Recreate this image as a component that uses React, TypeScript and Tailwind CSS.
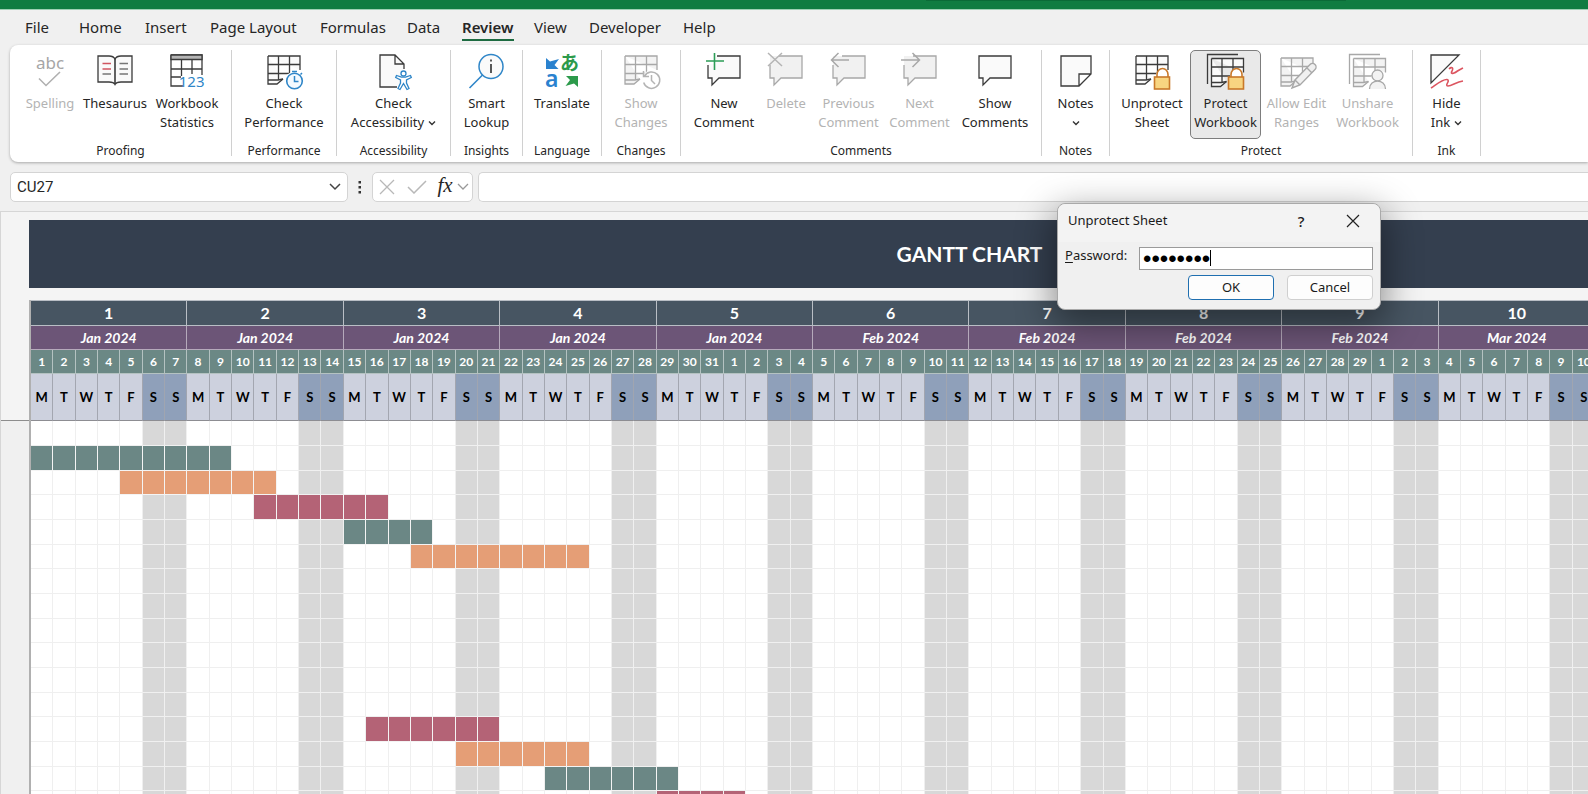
import React from "react";
import type { ReactNode } from "react";

const INK = "#3b3b3b";
const DIM = "#b4b4b4";
const BLUE = "#2f86c8";

function Icon({ children }: { children: ReactNode }) {
  return (
    <svg viewBox="0 0 40 40" className="h-10 w-10 shrink-0 overflow-visible" fill="none" strokeWidth={1.3} aria-hidden="true">
      {children}
    </svg>
  );
}

function Sheet({ color, fill = "#fafafa" }: { color: string; fill?: string }) {
  return (
    <g stroke={color}>
      <path d="M4 5h32v14M4 5v28h9l6-5" fill={fill} />
      <path d="M14.500 5v24M25.500 5v18M4 13.500h32M4 22.500h22M4 29h10l5-1" />
    </g>
  );
}

function Bubble({ color, fill, cut }: { color: string; fill: string; cut?: boolean }) {
  return (
    <>
      <path d="M4 5h32v22H15l-7 7v-7H4z" fill={fill} />
      <path d={cut ? "M13 5h23v22H15l-7 7v-7H4V14" : "M4 5h32v22H15l-7 7v-7H4z"} stroke={color} />
    </>
  );
}

const Lock = () => (
  <g>
    <path d="M25 26v-2.500a5.500 6 0 0 1 11 0V26" stroke="#c9792a" strokeWidth={1.6} fill="#fff" />
    <rect x="22.500" y="26" width="15" height="12" fill="#f8d581" stroke="#c9792a" strokeWidth={1.6} />
  </g>
);

const SpellingIcon = () => (
  <Icon>
    <text x="20" y="18" textAnchor="middle" fontSize="17" fontFamily="Noto Sans, sans-serif" fill="#a6a6a6">abc</text>
    <path d="M9 27.500l7 7L30 21" stroke="#b0b0b0" strokeWidth={1.6} />
  </Icon>
);
const ThesaurusIcon = () => (
  <Icon>
    <path d="M3 5h11c3 0 5 1 6 3 1-2 3-3 6-3h11v26H26c-3 0-5 .6-6 2.500-1-1.900-3-2.500-6-2.500H3z" fill="#fafafa" stroke={INK} />
    <path d="M20 8v25" stroke={INK} strokeWidth={1.6} />
    <path d="M7.500 12.500h8.500M7.500 18h8.500" stroke="#d05560" />
    <path d="M7.500 23h8.500M24.500 12.500H33M24.500 18H33M24.500 23H33" stroke="#777" />
  </Icon>
);
const StatisticsIcon = () => (
  <Icon>
    <path d="M4 4h31v20M4 4v31h12" stroke={INK} />
    <path d="M4 4h31v4.500H4z" fill="#b5b5b5" stroke={INK} />
    <path d="M14.500 9v16M25 9v14M4 18h31M4 26h10" stroke={INK} />
    <text x="37.500" y="36" textAnchor="end" fontSize="15" fontFamily="Noto Sans, sans-serif" fill={BLUE}>123</text>
  </Icon>
);
const PerformanceIcon = () => (
  <Icon>
    <Sheet color={INK} />
    <circle cx="30.500" cy="30" r="9.500" fill="#fff" />
    <circle cx="30.500" cy="30" r="7.800" fill="#f4faff" stroke={BLUE} strokeWidth={1.6} />
    <path d="M30.500 25v5.500h4M28 20.500h5M36.500 23.500l1.500-1.500" stroke={BLUE} strokeWidth={1.5} />
  </Icon>
);
const AccessibilityIcon = () => (
  <Icon>
    <path d="M6 4h15l9 9v22H6z" fill="#fafafa" />
    <path d="M23 36H6V4h15l9 9v5M21 4v9h9" stroke={INK} />
    <circle cx="29.500" cy="22.500" r="2.500" fill="#fff" stroke={BLUE} />
    <path d="M22.500 24.500l-.8 2 4.800 2.500v3l-2.500 5.500 2 1 3.500-6 3.500 6 2-1-2.500-5.500v-3l4.800-2.500-.8-2-5 1.700h-4z" fill="#fff" stroke={BLUE} />
  </Icon>
);
const LookupIcon = () => (
  <Icon>
    <circle cx="24" cy="15.500" r="12" fill="#fafafa" stroke={BLUE} strokeWidth={1.5} />
    <path d="M15.500 24L2.500 37" stroke={BLUE} strokeWidth={1.6} />
    <path d="M24 13v9M24 8.500v2" stroke={INK} strokeWidth={1.7} />
  </Icon>
);
const TranslateIcon = () => (
  <Icon>
    <path d="M4 7l4 3.500L17 8l-4.500 6 4 4H4z" fill="#2a82cf" />
    <path d="M36 36l-4-3.500-8.500 2.500 4.500-6-4-4h12z" fill="#2c9a4b" />
    <text x="3" y="36" fontSize="23" fontWeight="600" fontFamily="Noto Sans, sans-serif" fill="#2a82cf">a</text>
    <text x="18" y="19" fontSize="19" fontWeight="700" fontFamily="Noto Sans CJK JP, sans-serif" fill="#2c9a4b">あ</text>
  </Icon>
);
const ChangesIcon = () => (
  <Icon>
    <Sheet color="#a8a8a8" fill="#f3f3f3" />
    <circle cx="30.500" cy="29" r="9.800" fill="#fff" />
    <path d="M23.500 25a8.200 8.200 0 1 1-.8 6.500M22.500 20v5.500H28M30.500 24v5.500l3.500 3.500" stroke={DIM} strokeWidth={1.5} />
  </Icon>
);
const NewCommentIcon = () => (
  <Icon>
    <Bubble color={INK} fill="#fafafa" cut />
    <path d="M1 1h11v12H1z" fill="#fff" />
    <path d="M2 10h18M10.500 2v17" stroke="#2d9d57" strokeWidth={1.6} />
  </Icon>
);
const DeleteIcon = () => (
  <Icon>
    <Bubble color="#a8a8a8" fill="#f1f1f1" cut />
    <path d="M2 2l14 13M16 2L2 15" stroke={DIM} strokeWidth={1.5} />
  </Icon>
);
const PreviousIcon = () => (
  <Icon>
    <Bubble color="#a8a8a8" fill="#f1f1f1" cut />
    <path d="M20 9H3M9.500 2L2.500 9l7 7" stroke="#a8a8a8" strokeWidth={1.5} />
  </Icon>
);
const NextIcon = () => (
  <Icon>
    <Bubble color="#a8a8a8" fill="#f1f1f1" cut />
    <path d="M1 9h18M12.500 2l7 7-7 7" stroke="#a8a8a8" strokeWidth={1.5} />
  </Icon>
);
const ShowCommentsIcon = () => (
  <Icon>
    <Bubble color={INK} fill="#fafafa" />
  </Icon>
);
const NotesIcon = () => (
  <Icon>
    <path d="M5 5h30v18L23 35H5zM35 23H23v12" fill="#fafafa" stroke={INK} />
  </Icon>
);
const UnprotectIcon = () => (
  <Icon>
    <Sheet color={INK} />
    <path d="M21 38V26h3c-1-10 14-10 13-1l2 1v12z" fill="#fff" />
    <Lock />
  </Icon>
);
const ProtectIcon = () => (
  <Icon>
    <path d="M1.500 33V3.500H32" stroke={INK} />
    <g transform="translate(1.500 2.500)">
      <Sheet color={INK} />
    </g>
    <path d="M21 38V26h3c-1-10 14-10 13-1l2 1v12z" fill="#e9e9e9" />
    <Lock />
  </Icon>
);
const AllowIcon = () => (
  <Icon>
    <g transform="translate(0 2)">
      <Sheet color="#a8a8a8" fill="#f3f3f3" />
    </g>
    <path d="M15 37l3-8L33 13.500a3.300 3.300 0 0 1 5 5L23 34zM18 29l5 5M30 17l4.500 4.500" fill="#f0f0f0" stroke="#a8a8a8" strokeWidth={1.4} />
  </Icon>
);
const UnshareIcon = () => (
  <Icon>
    <path d="M1.500 33V3.500H32" stroke="#a8a8a8" />
    <g transform="translate(1.500 2.500)">
      <Sheet color="#a8a8a8" fill="#f3f3f3" />
    </g>
    <path d="M19 38.500c0-6 3-8 5-9-4-9 12-11 11 0 3 1 4.500 4 4.500 9z" fill="#fff" />
    <circle cx="29.500" cy="24.500" r="5.500" fill="#f3f3f3" stroke="#a8a8a8" />
    <path d="M21.500 38c0-10.500 16-10.500 16 0" fill="#f3f3f3" stroke="#a8a8a8" />
  </Icon>
);
const InkIcon = () => (
  <Icon>
    <path d="M4 4h28L4 32z" fill="#fafafa" stroke={INK} />
    <path d="M22 18c3-3 5-1 2.500 3-1 3 4 .5 6-1 2-1.500 3.500-2 5.500-3M4 37c6-4 12-9 16-8.500 4 1-3 6 1 6.500 4 0 8-4 15-5" stroke="#dc5560" strokeWidth={1.6} />
  </Icon>
);

const Chevron = () => (
  <svg viewBox="0 0 8 6" className="inline-block h-[6px] w-2" fill="none" stroke="#333" strokeWidth={1.4} aria-hidden="true">
    <path d="M1 1.500l3 3 3-3" />
  </svg>
);

type Cmd = { lines: string[]; icon: ReactNode; width: string; off?: boolean; on?: boolean; menu?: boolean };
type Group = { name: string; width: string; items: Cmd[] };

const groups: Group[] = [
  {
    name: "Proofing",
    width: "w-[221px] pl-3",
    items: [
      { lines: ["Spelling"], icon: <SpellingIcon />, width: "w-14", off: true },
      { lines: ["Thesaurus"], icon: <ThesaurusIcon />, width: "w-[74px]" },
      { lines: ["Workbook", "Statistics"], icon: <StatisticsIcon />, width: "w-[70px]" },
    ],
  },
  { name: "Performance", width: "w-[104px] justify-center", items: [{ lines: ["Check", "Performance"], icon: <PerformanceIcon />, width: "w-24" }] },
  { name: "Accessibility", width: "w-[113px] justify-center", items: [{ lines: ["Check", "Accessibility"], icon: <AccessibilityIcon />, width: "w-[104px]", menu: true }] },
  { name: "Insights", width: "w-[71px] justify-center", items: [{ lines: ["Smart", "Lookup"], icon: <LookupIcon />, width: "w-16" }] },
  { name: "Language", width: "w-[78px] justify-center", items: [{ lines: ["Translate"], icon: <TranslateIcon />, width: "w-16" }] },
  { name: "Changes", width: "w-[78px] justify-center", items: [{ lines: ["Show", "Changes"], icon: <ChangesIcon />, width: "w-16", off: true }] },
  {
    name: "Comments",
    width: "w-[360px] pl-2",
    items: [
      { lines: ["New", "Comment"], icon: <NewCommentIcon />, width: "w-[70px]" },
      { lines: ["Delete"], icon: <DeleteIcon />, width: "w-[54px]", off: true },
      { lines: ["Previous", "Comment"], icon: <PreviousIcon />, width: "w-[71px]", off: true },
      { lines: ["Next", "Comment"], icon: <NextIcon />, width: "w-[71px]", off: true },
      { lines: ["Show", "Comments"], icon: <ShowCommentsIcon />, width: "w-20" },
    ],
  },
  { name: "Notes", width: "w-[67px] justify-center", items: [{ lines: ["Notes", ""], icon: <NotesIcon />, width: "w-14", menu: true }] },
  {
    name: "Protect",
    width: "w-[302px] pl-1",
    items: [
      { lines: ["Unprotect", "Sheet"], icon: <UnprotectIcon />, width: "w-[76px]" },
      { lines: ["Protect", "Workbook"], icon: <ProtectIcon />, width: "w-[71px]", on: true },
      { lines: ["Allow Edit", "Ranges"], icon: <AllowIcon />, width: "w-[71px]", off: true },
      { lines: ["Unshare", "Workbook"], icon: <UnshareIcon />, width: "w-[71px]", off: true },
    ],
  },
  { name: "Ink", width: "w-[67px] justify-center", items: [{ lines: ["Hide", "Ink"], icon: <InkIcon />, width: "w-14", menu: true }] },
];

function RibbonButton({ cmd }: { cmd: Cmd }) {
  const tone = cmd.off ? "text-[#b3b3b3]" : "text-[#262626]";
  const box = cmd.on ? "rounded-[5px] border-[#7d7d7d] bg-[#e9e9e9]" : "border-transparent";
  return (
    <button
      type="button"
      disabled={cmd.off}
      aria-pressed={cmd.on}
      className={`flex h-[89px] shrink-0 flex-col items-center border text-[13px] leading-[19px] whitespace-nowrap ${cmd.width} ${tone} ${box}`}
    >
      {cmd.icon}
      <span className="mt-[3px]">{cmd.lines[0]}</span>
      {cmd.lines.length > 1 && (
        <span className="flex h-[19px] items-center gap-1">
          {cmd.lines[1]}
          {cmd.menu && <Chevron />}
        </span>
      )}
    </button>
  );
}

const tabs = [
  { name: "File", width: "w-[72px] pl-[25px]" },
  { name: "Home", width: "w-[66px] pl-[7px]" },
  { name: "Insert", width: "w-[65px] pl-[7px]" },
  { name: "Page Layout", width: "w-[110px] pl-[7px]" },
  { name: "Formulas", width: "w-[87px] pl-[7px]" },
  { name: "Data", width: "w-[55px] pl-[7px]" },
  { name: "Review", width: "w-[72px] pl-[7px]" },
  { name: "View", width: "w-[55px] pl-[7px]" },
  { name: "Developer", width: "w-[94px] pl-[7px]" },
  { name: "Help", width: "w-[50px] pl-[7px]" },
];

const WEEKS = 10;
const days = Array.from({ length: WEEKS * 7 }, (_, i) => new Date(2024, 0, 1 + i));
const monthNames = ["Jan", "Feb", "Mar"];
const letters = ["M", "T", "W", "T", "F", "S", "S"];

const TEAL = "bg-[#6b8785]";
const ORANGE = "bg-[#e59e76]";
const ROSE = "bg-[#b46376]";
const tasks = [
  { row: 1, from: 0, to: 8, color: TEAL },
  { row: 2, from: 4, to: 10, color: ORANGE },
  { row: 3, from: 10, to: 15, color: ROSE },
  { row: 4, from: 14, to: 17, color: TEAL },
  { row: 5, from: 17, to: 24, color: ORANGE },
  { row: 12, from: 15, to: 20, color: ROSE },
  { row: 13, from: 19, to: 24, color: ORANGE },
  { row: 14, from: 23, to: 28, color: TEAL },
  { row: 15, from: 28, to: 31, color: ROSE },
];

function cellStyle(row: number, col: number) {
  const task = tasks.find((t) => t.row === row && col >= t.from && col <= t.to);
  if (task) return `${task.color} border-[#f4f4f4]`;
  return col % 7 > 4 ? "bg-[#d8d8d8] border-[#f0f0f0]" : "bg-white border-[#efefef]";
}

function Gantt() {
  return (
    <table className="w-[calc(100%+8px)] table-fixed border-separate border-spacing-0 text-center font-[Lato,sans-serif] font-bold text-white">
      <thead>
        <tr className="h-[25px]">
          {Array.from({ length: WEEKS }, (_, w) => (
            <th key={w} colSpan={7} className="border-r border-b border-[#b9bec5] bg-[#475562] p-0 text-[16px] leading-5">
              {w + 1}
            </th>
          ))}
        </tr>
        <tr className="h-[24px]">
          {Array.from({ length: WEEKS }, (_, w) => (
            <th key={w} colSpan={7} className="border-r border-b border-[#b5a9bb] bg-[#6c5577] p-0 text-[14px] leading-5 italic">
              {monthNames[days[w * 7].getMonth()]} 2024
            </th>
          ))}
        </tr>
        <tr className="h-[24px]">
          {days.map((d, i) => (
            <th key={i} className="border-r border-b border-[#b4c2c1] bg-[#6b8885] p-0 text-[12px] leading-5">
              {d.getDate()}
            </th>
          ))}
        </tr>
        <tr className="h-[47px]">
          {days.map((_, i) => (
            <th
              key={i}
              className={`border-r border-b border-b-[#8d8d92] p-0 text-[13px] leading-5 text-black ${
                i % 7 > 4 ? "border-r-[#a0a5b0] bg-[#8fa0ba]" : "border-r-[#a3a6b0] bg-[#cdd1de]"
              }`}
            >
              {letters[i % 7]}
            </th>
          ))}
        </tr>
      </thead>
      <tbody>
        {Array.from({ length: 16 }, (_, r) => (
          <tr key={r} className={r % 3 === 2 ? "h-[24px]" : "h-[25px]"}>
            {days.map((_, c) => (
              <td key={c} className={`border-r border-b p-0 ${cellStyle(r, c)}`} />
            ))}
          </tr>
        ))}
      </tbody>
    </table>
  );
}

function PasswordDialog() {
  return (
    <form
      role="dialog"
      aria-labelledby="dialog-title"
      className="absolute top-[203px] left-[1057px] flex h-[107px] w-[324px] flex-col rounded-lg border border-[#a9a9a9] bg-[#f0f0f0] text-[13px] text-[#1a1a1a] shadow-[0_12px_36px_4px_rgba(0,0,0,0.42)]"
    >
      <div className="flex h-[38px] items-center rounded-t-lg bg-[#f3f3f3] pr-5 pb-1 pl-[10px]">
        <h2 id="dialog-title" className="grow text-[13px]">Unprotect Sheet</h2>
        <button type="button" aria-label="Help" className="mr-[37px] w-4 text-[15px] font-medium">?</button>
        <button type="button" aria-label="Close" className="h-[14px] w-[14px]">
          <svg viewBox="0 0 14 14" stroke="#222" strokeWidth={1.2} aria-hidden="true">
            <path d="M1 1l12 12M13 1L1 13" />
          </svg>
        </button>
      </div>
      <div className="flex h-8 items-start pt-[5px] pr-[7px] pl-[7px]">
        <label htmlFor="password" className="w-[74px] shrink-0 leading-4">
          <u className="underline-offset-2">P</u>assword:
        </label>
        <div className="relative min-w-0 grow">
          <input
            id="password"
            type="password"
            defaultValue="gantt024"
            className="block h-[23px] w-full border border-[#9a9a9a] bg-white px-[3px] font-['Liberation_Sans',sans-serif] text-[24px] leading-5 text-black outline-none"
          />
          <span className="absolute top-[3px] left-[71px] h-4 w-px bg-black" />
        </div>
      </div>
      <div className="flex justify-end gap-[13px] pt-[1px] pr-[7px]">
        <button type="button" className="h-[25px] w-[86px] rounded border border-[#1f6fb0] bg-[#fdfdfd]">OK</button>
        <button type="button" className="h-[25px] w-[86px] rounded border border-[#cfcfcf] bg-[#fdfdfd]">Cancel</button>
      </div>
    </form>
  );
}

export default function App() {
  return (
    <div className="relative flex h-screen flex-col overflow-hidden bg-[#f0f0f0] font-['Noto_Sans',sans-serif] text-[#262626]">
      <header className="flex h-[10px] shrink-0 border-b border-[#9fd0b4] bg-[#107c41]">
        <div className="ml-[926px] h-px w-[420px] bg-[#0b6a37]" />
      </header>
      <nav className="flex h-[35px] shrink-0 text-[15px]">
        {tabs.map((t) => (
          <a key={t.name} href="#" className={`flex shrink-0 items-start pt-[6px] leading-[23px] whitespace-nowrap ${t.width}`}>
            {t.name === "Review" ? (
              <span className="h-[25px] border-b-2 border-[#1d6b41] font-semibold">{t.name}</span>
            ) : (
              t.name
            )}
          </a>
        ))}
      </nav>
      <section aria-label="Review" className="ml-[10px] flex h-[117px] shrink-0 rounded-l-lg bg-white pt-[5px] shadow-[0_1px_3px_rgba(0,0,0,0.3)]">
        {groups.map((g) => (
          <div key={g.name} className="flex h-[106px] shrink-0 flex-col border-r border-[#d0d0d0]">
            <div className={`flex ${g.width}`}>
              {g.items.map((cmd) => (
                <RibbonButton key={cmd.lines.join(" ")} cmd={cmd} />
              ))}
            </div>
            <div className="pt-[5px] text-center text-[12px] leading-[14px]">{g.name}</div>
          </div>
        ))}
      </section>
      <div className="mt-[10px] flex h-[30px] shrink-0 pl-[10px]">
        <div className="flex w-[338px] items-center rounded-[5px] border border-[#d4d4d4] bg-white pr-[6px]">
          <input aria-label="Name box" defaultValue="CU27" className="min-w-0 grow pl-[6px] font-[Roboto,sans-serif] text-[15px] outline-none" />
          <button type="button" aria-label="Open name list">
            <svg viewBox="0 0 12 8" className="h-2 w-3" fill="none" stroke="#444" strokeWidth={1.5} aria-hidden="true">
              <path d="M1 1l5 5 5-5" />
            </svg>
          </button>
        </div>
        <svg viewBox="0 0 24 30" className="w-6" fill="#333" aria-hidden="true">
          <path d="M10.500 9h2.500v2.500h-2.500zM10.500 14h2.500v2.500h-2.500zM10.500 19h2.500v2.500h-2.500z" />
        </svg>
        <div className="flex w-[101px] items-center rounded-[5px] border border-[#d4d4d4] bg-white pl-[6px]">
          <button type="button" aria-label="Cancel entry" disabled className="w-7">
            <svg viewBox="0 0 16 16" className="h-4 w-4" stroke="#b8b8b8" strokeWidth={1.3} aria-hidden="true">
              <path d="M1 1l14 14M15 1L1 15" />
            </svg>
          </button>
          <button type="button" aria-label="Confirm entry" disabled className="w-[26px]">
            <svg viewBox="0 0 20 14" className="h-[14px] w-5" fill="none" stroke="#b8b8b8" strokeWidth={1.5} aria-hidden="true">
              <path d="M1 7l6 6L19 1" />
            </svg>
          </button>
          <button type="button" className="w-6 pb-1 font-['Liberation_Serif',serif] text-[21px] leading-6 italic">fx</button>
          <svg viewBox="0 0 12 8" className="h-2 w-3" fill="none" stroke="#999" strokeWidth={1.3} aria-hidden="true">
            <path d="M1 1l5 5 5-5" />
          </svg>
        </div>
        <input aria-label="Formula" className="ml-[5px] min-w-0 grow rounded-l-[5px] border border-r-0 border-[#d4d4d4] bg-white px-2 outline-none" />
      </div>
      <main className="mt-[9px] flex min-h-0 grow border-t border-l border-[#d6d6d6] bg-[#f4f4f4]">
        <div className="flex w-7 shrink-0 flex-col">
          <div className="h-[209px] shrink-0 border-b border-[#8d8d8d]" />
          <div className="grow bg-[#f0f0f0]" />
        </div>
        <div className="min-w-0 grow overflow-hidden">
          <h1 className="mt-2 flex h-[68px] items-center justify-center bg-[#343f4f] pl-[322px] font-[Lato,sans-serif] text-[21px] font-bold text-white">
            GANTT CHART
          </h1>
          <div className="mt-3 border-l-2 border-[#b0b0b0]">
            <div className="border-t border-[#b9bec5]">
              <Gantt />
            </div>
          </div>
        </div>
      </main>
      <PasswordDialog />
    </div>
  );
}
